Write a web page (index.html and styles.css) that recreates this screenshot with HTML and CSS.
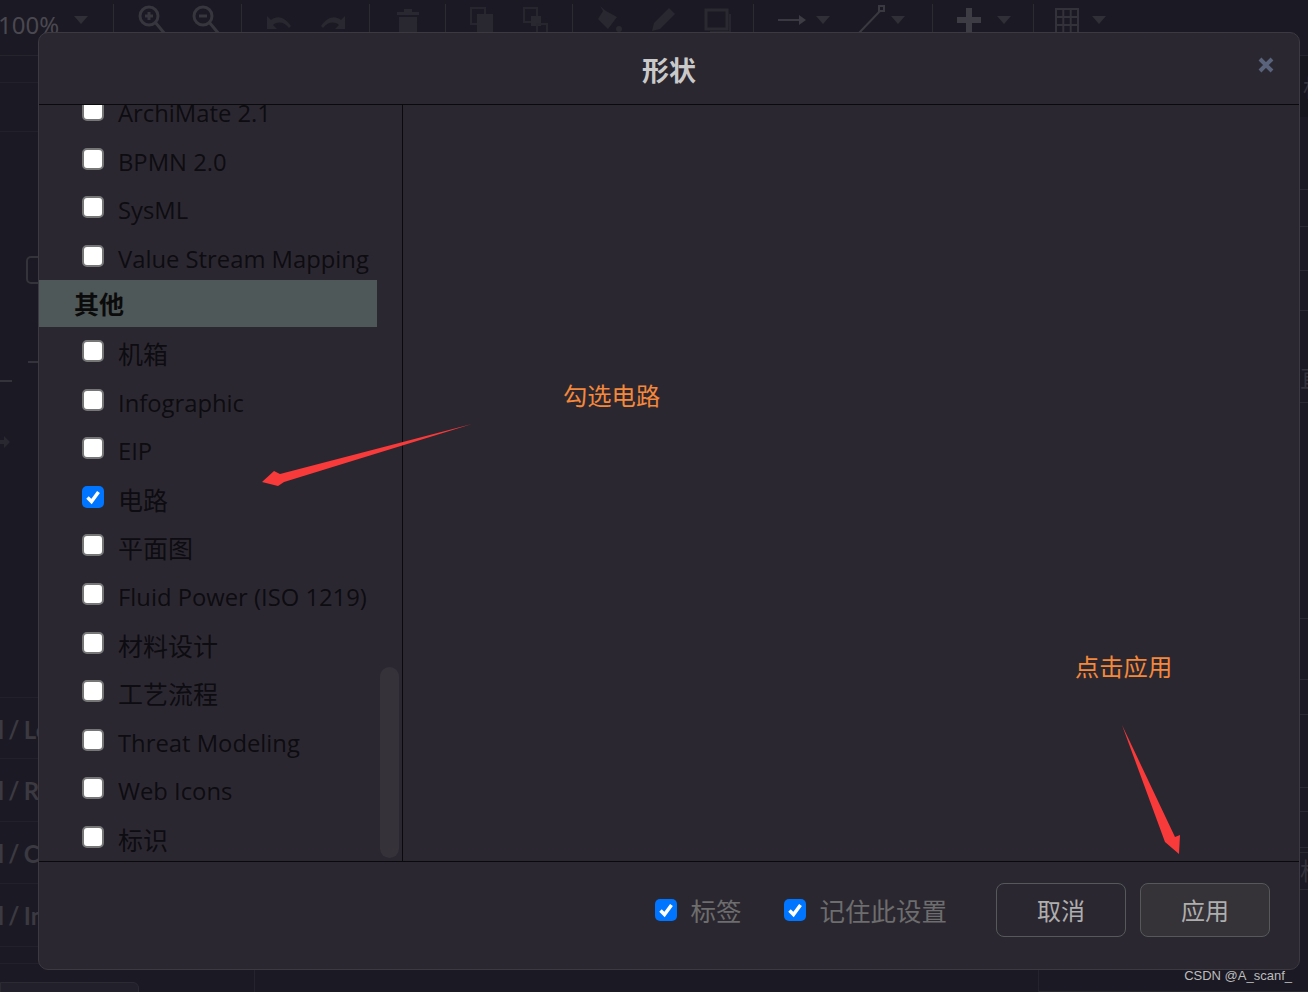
FILE: index.html
```html
<!DOCTYPE html>
<html lang="zh-CN">
<head>
<meta charset="utf-8">
<title>形状</title>
<link rel="stylesheet" href="styles.css">
</head>
<body>
<div class="app">
  <header class="toolbar">
    <div class="tgroup g-zoomlabel"><span class="pct">100%</span><i class="caret"></i></div>
    <div class="tgroup g-zoom">
      <svg class="ic" viewBox="0 0 28 32"><circle cx="12" cy="12" r="9" class="st"/><path d="M8 12h8M12 8v8M18 18l10 12" class="st"/></svg>
      <svg class="ic" viewBox="0 0 28 32"><circle cx="12" cy="12" r="9" class="st"/><path d="M8 12h8M18 18l10 12" class="st"/></svg>
    </div>
    <div class="tgroup g-hist">
      <svg class="ic" viewBox="0 0 28 32"><path d="M2 12l0 13 10 0-4-4c5-4 11-3 16 3l2-2C20 13 12 11 6 16z" class="fl"/></svg>
      <svg class="ic" viewBox="0 0 28 32"><path d="M26 12l0 13-10 0 4-4c-5-4-11-3-16 3l-2-2C8 13 16 11 22 16z" class="fl"/></svg>
    </div>
    <div class="tgroup g-trash">
      <svg class="ic" viewBox="0 0 28 32"><path d="M3 8h22v3H3zM10 5h8v3h-8zM5 13h18v19H5z" class="fl"/></svg>
    </div>
    <div class="tgroup g-order">
      <svg class="ic" viewBox="0 0 28 32"><rect x="2" y="4" width="14" height="16" class="th"/><rect x="8" y="10" width="16" height="20" class="fl"/></svg>
      <svg class="ic" viewBox="0 0 28 32"><rect x="3" y="4" width="13" height="14" class="th"/><rect x="10" y="12" width="10" height="10" class="fl"/><rect x="16" y="20" width="10" height="10" class="th"/></svg>
    </div>
    <div class="tgroup g-style">
      <svg class="ic" viewBox="0 0 28 32"><path d="M5 2l3 5-5 8 10 10 9-12-11-6z" class="fl"/><circle cx="24" cy="25" r="3" class="fl"/></svg>
      <svg class="ic" viewBox="0 0 28 32"><path d="M20 4l6 6-15 15-8 2 2-8z" class="fl"/><path d="M3 30h22" class="th"/></svg>
      <svg class="ic" viewBox="0 0 28 32"><rect x="3" y="6" width="21" height="19" class="stdim"/><path d="M7 28h20V10" class="th"/></svg>
    </div>
    <div class="tgroup g-conn">
      <svg class="ic" viewBox="0 0 28 32"><path d="M0 16h22" class="st2"/><path d="M21 11l7 5-7 5z" class="flb"/></svg>
      <i class="caret"></i>
      <svg class="ic ic-line" viewBox="0 0 28 32"><path d="M2 30L24 7" class="st2"/><rect x="23" y="2" width="5" height="5" class="st2"/></svg>
      <i class="caret"></i>
    </div>
    <div class="tgroup g-plus">
      <svg class="ic" viewBox="0 0 28 32"><path d="M11 4h6v9h9v6h-9v9h-6v-9H2v-6h9z" class="flb"/></svg>
      <i class="caret"></i>
    </div>
    <div class="tgroup g-grid">
      <svg class="ic" viewBox="0 0 28 32"><path d="M3 5h22v24H3zM3 13h22M3 21h22M10.300 5v24M17.700 5v24" class="th2"/></svg>
      <i class="caret"></i>
    </div>
  </header>

  <main class="workspace">
    <aside class="leftside">
      <div class="lrow"></div>
      <div class="lrow"></div>
      <div class="lrow"></div>
      <div class="lrow"><span class="lpath">l / Le</span></div>
      <div class="lrow"><span class="lpath">l / Re</span></div>
      <div class="lrow"><span class="lpath">l / Cu</span></div>
      <div class="lrow"><span class="lpath">l / In</span></div>
      <div class="lrow"></div>
      <div class="lrow lastrow"></div>
      <div class="tab"></div>
      <i class="frag frag-rect"></i>
      <i class="frag frag-d1"></i>
      <i class="frag frag-d2"></i>
      <svg class="frag frag-arrow" viewBox="0 0 10 12"><path d="M0 4h4V0l6 6-6 6V8H0z" class="fl"/></svg>
    </aside>
    <section class="canvas"></section>
    <aside class="rightside">
      <div class="rrow rblock"><span class="rlabel rl-top">标</span></div>
      <div class="rrow"></div>
      <div class="rrow"></div>
      <div class="rrow"></div>
      <div class="rrow"></div>
      <div class="rrow"><span class="rlabel rl-mid">直</span></div>
      <div class="rrow"></div>
      <div class="rrow"></div>
      <div class="rrow"></div>
      <div class="rrow"></div>
      <div class="rrow"></div>
      <div class="rrow"></div>
      <div class="rrow"></div>
      <div class="rrow"><span class="rlabel rl-low">格</span></div>
      <div class="rrow"></div>
    </aside>
  </main>
</div>

<div class="dialog">
  <div class="dlg-head">
    <h1 class="dlg-title">形状</h1>
    <svg class="dlg-close" viewBox="0 0 16 16"><path d="M2 2l12 12M14 2L2 14"/></svg>
  </div>
  <div class="dlg-body">
    <div class="listcol">
      <div class="list">
        <label class="row"><span class="box"></span><span class="rowtext">ArchiMate 2.1</span></label>
        <label class="row"><span class="box"></span><span class="rowtext">BPMN 2.0</span></label>
        <label class="row"><span class="box"></span><span class="rowtext">SysML</span></label>
        <label class="row"><span class="box"></span><span class="rowtext">Value Stream Mapping</span></label>
        <div class="grouphead">其他</div>
        <label class="row"><span class="box"></span><span class="rowtext cjk">机箱</span></label>
        <label class="row"><span class="box"></span><span class="rowtext">Infographic</span></label>
        <label class="row"><span class="box"></span><span class="rowtext">EIP</span></label>
        <label class="row"><span class="box on"><svg viewBox="0 0 22 22"><path d="M5.500 11.500l4 4 7-9.500"/></svg></span><span class="rowtext cjk">电路</span></label>
        <label class="row"><span class="box"></span><span class="rowtext cjk">平面图</span></label>
        <label class="row"><span class="box"></span><span class="rowtext">Fluid Power (ISO 1219)</span></label>
        <label class="row"><span class="box"></span><span class="rowtext cjk">材料设计</span></label>
        <label class="row"><span class="box"></span><span class="rowtext cjk">工艺流程</span></label>
        <label class="row"><span class="box"></span><span class="rowtext">Threat Modeling</span></label>
        <label class="row"><span class="box"></span><span class="rowtext">Web Icons</span></label>
        <label class="row"><span class="box"></span><span class="rowtext cjk">标识</span></label>
      </div>
      <div class="thumb"></div>
    </div>
    <div class="preview"></div>
  </div>
  <div class="dlg-foot">
    <label class="opt"><span class="box on"><svg viewBox="0 0 22 22"><path d="M5.500 11.500l4 4 7-9.500"/></svg></span><span>标签</span></label>
    <label class="opt opt-remember"><span class="box on"><svg viewBox="0 0 22 22"><path d="M5.500 11.500l4 4 7-9.500"/></svg></span><span>记住此设置</span></label>
    <button class="btn btn-cancel" type="button">取消</button>
    <button class="btn btn-apply" type="button">应用</button>
  </div>
</div>

<span class="note note-a">勾选电路</span>
<span class="note note-b">点击应用</span>
<svg class="marks" viewBox="0 0 1308 992">
  <polygon points="472,424 280,474 274,471 262,482 278,486 284,482"/>
  <polygon points="1122,725 1175,837 1180,835 1179,854 1165,842"/>
</svg>
<span class="watermark">CSDN @A_scanf_</span>
</body>
</html>
```
FILE: styles.css
```css
* { box-sizing: border-box; }
html, body { margin: 0; height: 100%; }
body {
  position: relative;
  width: 1308px;
  height: 992px;
  overflow: hidden;
  background: #1b1923;
  font-family: "Open Sans", "Noto Sans CJK SC", sans-serif;
}
.app { display: flex; flex-direction: column; height: 992px; }

/* toolbar behind the modal */
.toolbar {
  display: flex;
  align-items: flex-start;
  height: 56px;
  flex: none;
  padding-top: 4px;
  border-bottom: 1px solid #25232c;
}
.tgroup {
  display: flex;
  align-items: center;
  justify-content: center;
  height: 32px;
  border-right: 1px solid #2c2a33;
  flex: none;
}
.g-zoomlabel { width: 114px; justify-content: flex-start; }
.g-zoom { width: 128px; gap: 26px; }
.g-hist { width: 128px; gap: 26px; }
.g-trash { width: 76px; }
.g-order { width: 127px; gap: 24px; }
.g-style { width: 181px; gap: 26px; }
.g-conn { width: 179px; gap: 10px; justify-content: flex-start; padding-left: 24px; }
.g-plus { width: 101px; gap: 14px; }
.g-grid { width: 101px; gap: 11px; border-right: 0; justify-content: flex-start; padding-left: 19px; }
.pct {
  width: 75px;
  padding-top: 10px;
  margin-left: -2px;
  margin-right: 1px;
  color: #4a4850;
  font-size: 24px;
  line-height: 32px;
  font-family: "Noto Sans", sans-serif;
}
.caret {
  display: block;
  width: 0;
  height: 0;
  border-left: 7.500px solid transparent;
  border-right: 7.500px solid transparent;
  border-top: 8px solid #302e36;
}
.ic { display: block; width: 28px; height: 32px; flex: none; overflow: visible; }
.ic-line { margin: 0 -3px 0 16px; }
.st { fill: none; stroke: #37353d; stroke-width: 3; }
.stdim { fill: none; stroke: #2a2830; stroke-width: 3; }
.st2 { fill: none; stroke: #3a3840; stroke-width: 2; }
.th { fill: none; stroke: #27252d; stroke-width: 2; }
.th2 { fill: none; stroke: #33313a; stroke-width: 2; }
.fl { fill: #29272f; }
.flb { fill: #3d3b43; }

/* panels behind the modal */
.workspace { flex: 1; display: flex; min-height: 0; }
.leftside {
  position: relative;
  width: 255px;
  flex: none;
  display: grid;
  grid-template-rows: 27px 49px 566px 61px 63px 62px 63px 17px 19px;
  border-right: 1px solid #25232c;
}
.lrow { border-bottom: 1px solid #22202a; position: relative; overflow: hidden; }
.lastrow { border-bottom: 0; }
.lpath {
  display: block;
  padding-top: 14px;
  margin-left: -2px;
  color: #3b3941;
  font: 700 24px/36px "Lato", sans-serif;
  word-spacing: -1.500px;
  white-space: pre;
}
.tab {
  position: absolute;
  left: 0;
  top: 926px;
  width: 139px;
  height: 20px;
  background: #22202a;
  border: 1px solid #2c2a33;
  border-radius: 0 6px 0 0;
}
.frag { position: absolute; display: block; }
.frag-rect { left: 26px; top: 200px; width: 20px; height: 28px; border: 2px solid #34323a; border-radius: 5px; }
.frag-d1 { left: 28px; top: 305px; width: 12px; height: 2px; background: #34323a; }
.frag-d2 { left: 0; top: 324px; width: 12px; height: 2px; background: #34323a; }
.frag-arrow { left: 0; top: 380px; width: 10px; height: 12px; }
.canvas { flex: 1; }
.rightside {
  width: 270px;
  flex: none;
  display: grid;
  grid-template-rows: 61px 73px 37px 44px 40px 92px 216px 61px 35px 73px 24px 36px 5px 37px 1fr;
  border-left: 1px solid #25232c;
}
.rrow { border-bottom: 1px solid #2a2831; overflow: hidden; }
.rblock { background: #17151e; border-bottom: 0; }
.rlabel {
  display: block;
  padding-left: 261px;
  color: #34323a;
  font-size: 24px;
  line-height: 30px;
  white-space: nowrap;
}
.rl-top { padding-top: 17px; padding-left: 264px; }
.rl-mid { padding-top: 52px; }
.rl-low { padding-top: 3px; }

/* modal */
.dialog {
  position: absolute;
  left: 38px;
  top: 32px;
  width: 1262px;
  height: 938px;
  display: flex;
  flex-direction: column;
  background: #2b2730;
  border: 1px solid #3c3941;
  border-radius: 10px;
}
.dlg-head {
  position: relative;
  height: 72px;
  flex: none;
  display: flex;
  align-items: center;
  justify-content: center;
  border-bottom: 1px solid #0a0a0c;
}
.dlg-title {
  margin: 0;
  color: #c9c9c9;
  font-size: 27px;
  font-weight: 700;
  line-height: 36px;
  font-family: "Noto Sans CJK SC", sans-serif;
  position: relative;
  top: 1px;
}
.dlg-close {
  position: absolute;
  right: 25px;
  top: 24px;
  width: 16px;
  height: 16px;
  fill: none;
  stroke: #59637c;
  stroke-width: 4;
}
.dlg-body { flex: 1; display: flex; min-height: 0; }
.listcol {
  position: relative;
  width: 364px;
  flex: none;
  overflow: hidden;
  border-right: 1px solid #0a0a0c;
}
.list { width: 338px; margin-top: -19.200px; }
.row {
  display: flex;
  align-items: center;
  height: 48.600px;
  padding-left: 43px;
  gap: 14px;
}
.rowtext {
  padding-top: 6px;
  color: #0d0c10;
  font-size: 23.800px;
  line-height: 36px;
  white-space: nowrap;
}
.rowtext.cjk { font-size: 25px; }
.grouphead {
  height: 46.600px;
  padding: 4px 0 0 35px;
  background: #4f5858;
  color: #0b0b0b;
  font-size: 25px;
  font-weight: 700;
  line-height: 40px;
}
.box {
  display: block;
  flex: none;
  width: 22px;
  height: 22px;
  background: #fff;
  border: 2px solid #767676;
  border-radius: 5px;
}
.box.on { background: #0075ff; border: 0; }
.box svg { display: block; width: 22px; height: 22px; fill: none; stroke: #fff; stroke-width: 3.500; }
.thumb {
  position: absolute;
  left: 341px;
  top: 562px;
  width: 19px;
  height: 191px;
  background: #35323a;
  border-radius: 10px;
}
.preview { flex: 1; }
.dlg-foot {
  height: 108px;
  flex: none;
  display: flex;
  align-items: center;
  justify-content: flex-end;
  padding: 0 29px 12px 0;
  border-top: 1px solid #0a0a0c;
}
.opt {
  display: flex;
  align-items: center;
  gap: 13px;
  margin-right: 43px;
  color: #6d6d6d;
  font-size: 25.500px;
  line-height: 36px;
  font-family: "Noto Sans CJK SC", sans-serif;
}
.opt-remember { margin-right: 49px; }
.btn {
  width: 130px;
  height: 54px;
  padding: 0;
  color: #aeaeae;
  background: transparent;
  border: 1px solid #545a5a;
  border-radius: 8px;
  font-size: 24px;
  font-family: "Noto Sans CJK SC", sans-serif;
}
.btn-apply { margin-left: 14px; background: #353238; }

/* annotations on the screenshot */
.note {
  position: absolute;
  color: #f5883a;
  font-size: 24.300px;
  line-height: 32px;
  font-family: "Noto Sans CJK SC", sans-serif;
}
.note-a { left: 563px; top: 379px; }
.note-b { left: 1075px; top: 650px; }
.marks {
  position: absolute;
  left: 0;
  top: 0;
  width: 1308px;
  height: 992px;
  fill: #f93a3a;
  pointer-events: none;
}
.watermark {
  position: absolute;
  right: 16px;
  top: 967px;
  color: #bdbdbd;
  font: 13px/18px "Liberation Sans", sans-serif;
}
```
